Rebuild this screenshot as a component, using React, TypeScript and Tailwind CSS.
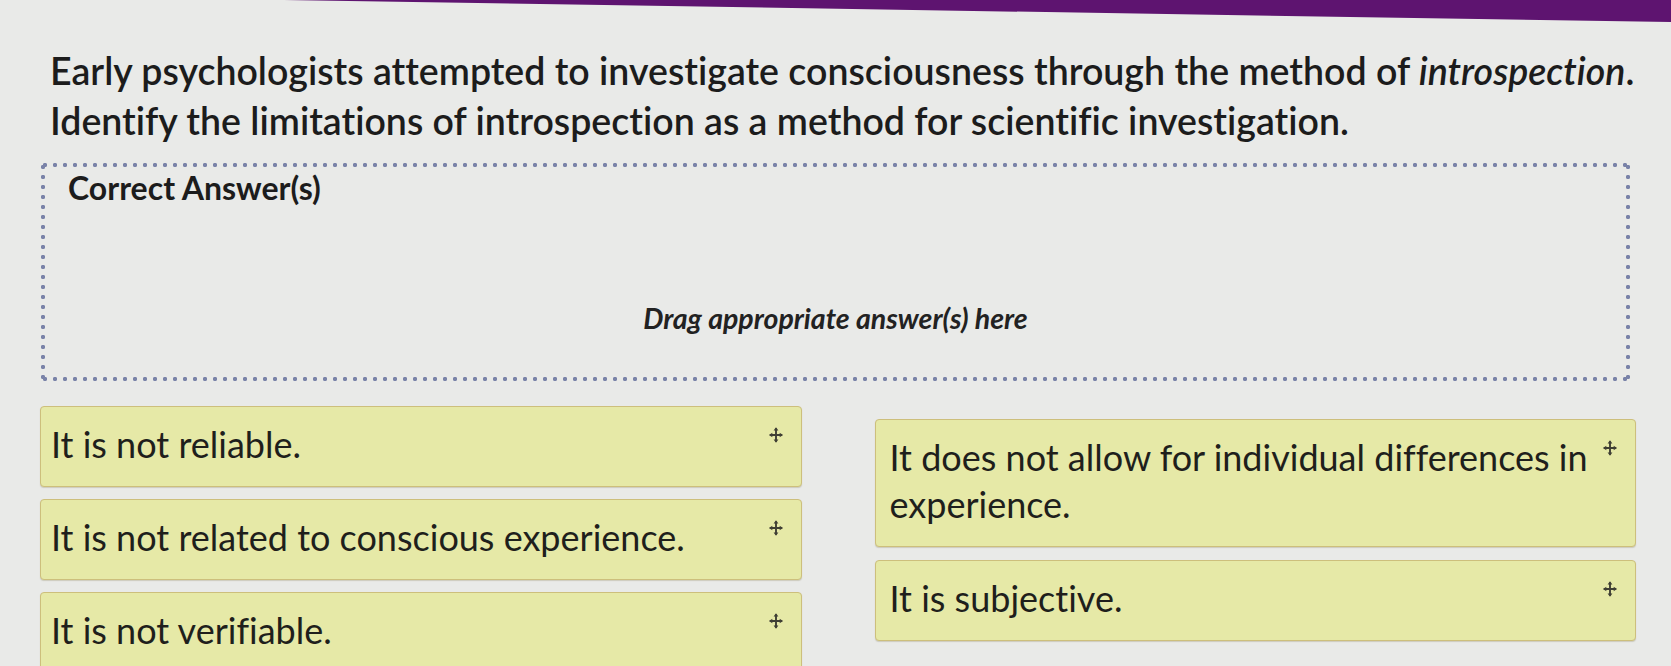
import React from "react";

function MoveGlyph() {
  return (
    <svg width="14" height="16" viewBox="0 0 14 16" className="shrink-0">
      <g stroke="#3f3f34" strokeWidth="1.9" fill="none" strokeLinecap="round">
        <line x1="7" y1="2" x2="7" y2="14" />
        <line x1="1.5" y1="8" x2="12.5" y2="8" />
      </g>
      <g fill="#3f3f34">
        <polygon points="7,0.3 4.6,3.5 9.4,3.5" />
        <polygon points="7,15.7 4.6,12.5 9.4,12.5" />
        <polygon points="0.1,8 3.3,5.7 3.3,10.3" />
        <polygon points="13.9,8 10.7,5.7 10.7,10.3" />
      </g>
    </svg>
  );
}

function AnswerCard({ text, className = "" }: { text: string; className?: string }) {
  return (
    <div
      className={
        "flex items-start justify-between rounded-[4px] border border-[#cdbf7c] bg-[#e6e9a7] pr-[18px] pt-[14px] pb-[18px] shadow-[0_1px_1px_rgba(120,110,60,0.25)] " +
        className
      }
    >
      <span className="text-[36px] leading-[47px] text-[#1f1f1c] pr-1">{text}</span>
      <div className="pt-[6px]">
        <MoveGlyph />
      </div>
    </div>
  );
}

export default function App() {
  return (
    <div
      className="w-full h-[666px] overflow-hidden bg-[#e9eae8] text-[#1c1c1c] [font-variant-ligatures:none]"
      style={{ fontFamily: "Lato, 'Open Sans', 'Liberation Sans', sans-serif" }}
    >
      {/* top header strip */}
      <div className="h-[22px] w-full [clip-path:polygon(17%_0,100%_0,100%_100%,17%_0)] bg-[#5e1470]" />

      <div className="pl-[50px] pr-[20px] pt-[24px]">
        <p className="text-[37.5px] leading-[50px] font-semibold whitespace-nowrap">
          Early psychologists attempted to investigate consciousness through the method of{" "}
          <em className="italic">introspection</em>.
          <br />
          Identify the limitations of introspection as a method for scientific investigation.
        </p>
      </div>

      <div className="px-[40px] pt-[16px]">
        {/* dotted drop zone outline, drawn as rows of dots on each edge */}
        <div className="h-[220px] flex flex-col [background-image:radial-gradient(circle,#7a83a8_1.9px,transparent_2.4px),radial-gradient(circle,#7a83a8_1.9px,transparent_2.4px),radial-gradient(circle,#7a83a8_1.9px,transparent_2.4px),radial-gradient(circle,#7a83a8_1.9px,transparent_2.4px)] [background-size:10px_6px,10px_6px,6px_10px,6px_10px] [background-position:0_0,0_100%,0_0,100%_0] [background-repeat:repeat-x,repeat-x,repeat-y,repeat-y]">
          <div className="pl-[28px] pt-[6px] text-[32px] leading-[40px] font-bold">Correct Answer(s)</div>
          <div className="mt-[92px] text-center text-[28.5px] leading-[36px] font-bold italic text-[#222]">
            Drag appropriate answer(s) here
          </div>
        </div>
      </div>

      <div className="grid grid-cols-2 gap-x-[73px] pl-[40px] pr-[35px] pt-[24px]">
        <div className="flex flex-col gap-[12px]">
          <AnswerCard text="It is not reliable." className="pl-[10px]" />
          <AnswerCard text="It is not related to conscious experience." className="pl-[10px]" />
          <AnswerCard text="It is not verifiable." className="pl-[10px]" />
        </div>
        <div className="flex flex-col gap-[13px] mt-[13px]">
          <AnswerCard text="It does not allow for individual differences in experience." className="pl-[14px]" />
          <AnswerCard text="It is subjective." className="pl-[14px]" />
        </div>
      </div>
    </div>
  );
}
